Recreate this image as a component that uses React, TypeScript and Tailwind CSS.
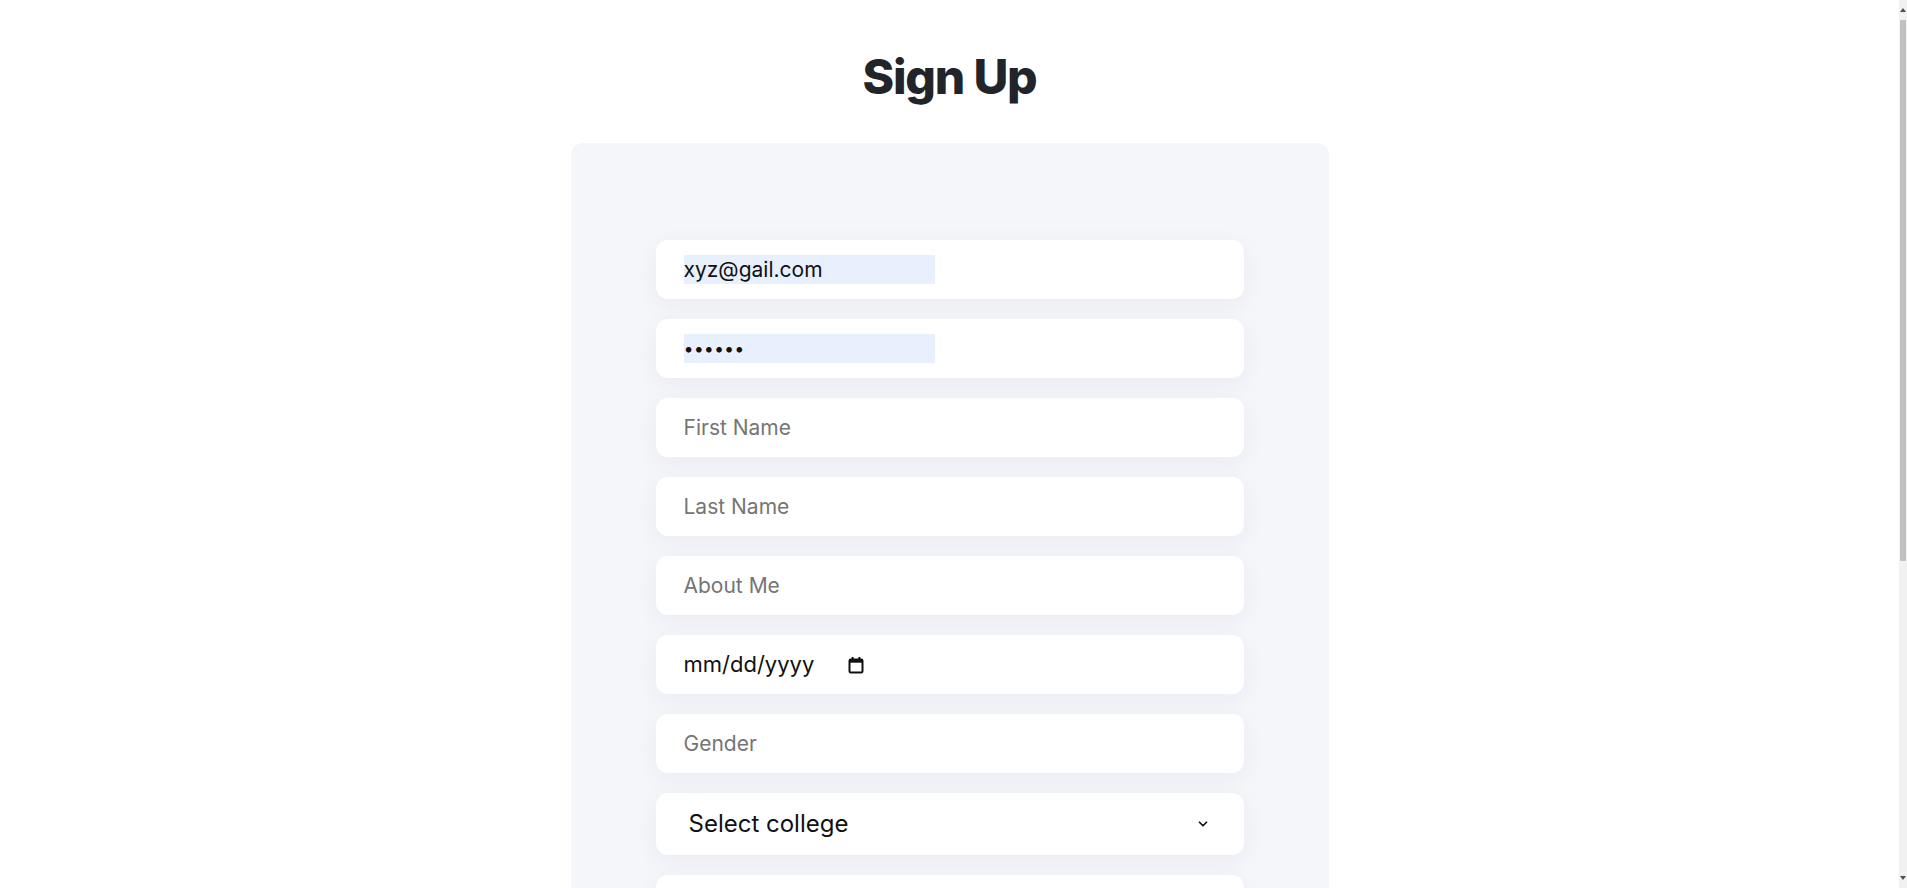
import React from "react";
import { ChevronDown } from "lucide-react";

const FONT = { fontFamily: "Inter, 'Open Sans', sans-serif" };

function Field({ children, tall }: { children: React.ReactNode; tall?: boolean }) {
  return (
    <div
      className={
        "flex items-center rounded-xl bg-white px-[28px] shadow-[0_6px_24px_rgba(30,40,80,0.05)] " +
        (tall ? "h-[62px]" : "h-[59px]")
      }
    >
      {children}
    </div>
  );
}

function CalendarGlyph() {
  return (
    <svg width="16" height="18" viewBox="0 0 16 18" className="shrink-0">
      <rect x="1.5" y="3.5" width="13" height="13" rx="1.2" fill="none" stroke="#111" strokeWidth="2" />
      <rect x="1.5" y="3.5" width="13" height="3.2" fill="#111" />
      <rect x="3.6" y="1" width="2" height="3.5" fill="#111" />
      <rect x="10.4" y="1" width="2" height="3.5" fill="#111" />
    </svg>
  );
}

// window scrollbar as it appears in the screenshot
function Scrollbar() {
  return (
    <aside className="flex h-screen w-[8px] shrink-0 flex-col bg-[#f1f1f1]">
      <div className="flex h-[20px] items-center justify-center">
        <svg width="6" height="4" viewBox="0 0 6 4"><path d="M0 4 L3 0 L6 4 Z" fill="#505050" /></svg>
      </div>
      <div className="mx-[1px] h-[541px] rounded-[1px] bg-[#c1c1c1]" />
      <div className="flex-1" />
      <div className="flex h-[20px] items-center justify-center">
        <svg width="6" height="4" viewBox="0 0 6 4"><path d="M0 0 L6 0 L3 4 Z" fill="#505050" /></svg>
      </div>
    </aside>
  );
}

export default function App() {
  const placeholders = ["First Name", "Last Name", "About Me"];
  const inputCls =
    "h-[29px] w-[251px] bg-transparent text-[21px] text-[#111] outline-none placeholder:text-[#757575]";

  return (
    <div className="flex h-screen overflow-hidden bg-white" style={FONT}>
      <main className="min-w-0 flex-1 overflow-y-auto pb-20">
        <div className="pt-[48px] text-center">
          <h1 className="text-[48px] font-extrabold leading-[58px] tracking-tight text-[#212529]">Sign Up</h1>
        </div>

        <div className="mx-auto mt-[37px] w-[758px] rounded-xl bg-[#f5f6fa] px-[85px] pt-[97px] pb-16">
          <form className="flex flex-col gap-[20px]" onSubmit={(e) => e.preventDefault()}>
            <Field>
              <input
                type="email"
                defaultValue="xyz@gail.com"
                className="h-[29px] w-[251px] bg-[#e8f0fe] text-[21px] text-[#111] outline-none"
              />
            </Field>
            <Field>
              <input
                type="password"
                defaultValue="123456"
                className="h-[29px] w-[251px] bg-[#e8f0fe] text-[18px] text-[#111] outline-none"
              />
            </Field>

            {placeholders.map((p) => (
              <Field key={p}>
                <input type="text" placeholder={p} className={inputCls} />
              </Field>
            ))}

            <Field>
              <div className="flex items-center gap-[34px] text-[22px] text-[#111]">
                <span>mm/dd/yyyy</span>
                <CalendarGlyph />
              </div>
            </Field>

            <Field>
              <input type="text" placeholder="Gender" className={inputCls} />
            </Field>

            <Field tall>
              <div className="flex w-full items-center justify-between pl-[5px] pr-[6px]">
                <span className="text-[24px] text-[#111]">Select college</span>
                <ChevronDown size={14} strokeWidth={3} className="text-[#111]" />
              </div>
            </Field>

            <Field>
              <input type="text" placeholder="Phone Number" className={inputCls} />
            </Field>

            <button className="mt-4 h-[56px] rounded-xl bg-[#212529] text-[18px] font-semibold text-white">
              Sign Up
            </button>
          </form>
        </div>
      </main>
      <Scrollbar />
    </div>
  );
}
